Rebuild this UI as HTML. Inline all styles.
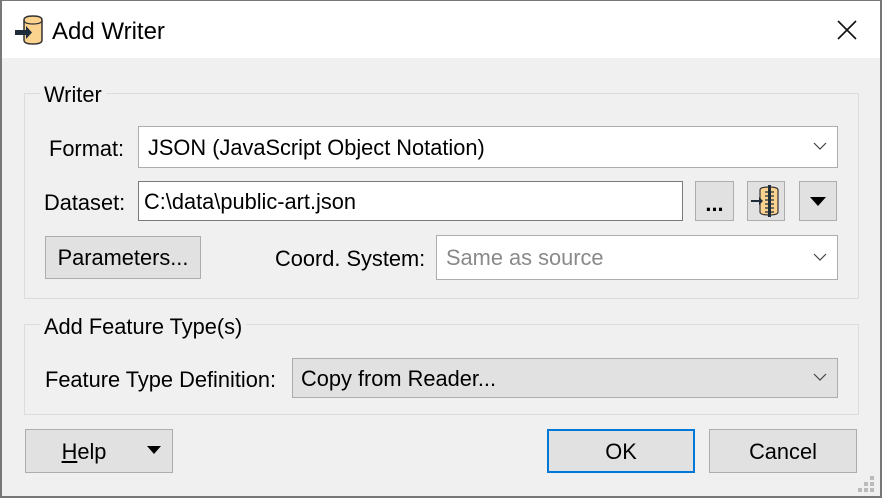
<!DOCTYPE html>
<html><head><meta charset="utf-8"><style>
*{box-sizing:border-box;margin:0;padding:0}
body{width:882px;height:498px;overflow:hidden;background:#f0f0f0;font-family:"Liberation Sans",sans-serif;font-size:21.8px;color:#000;position:relative}
.a{position:absolute;white-space:nowrap}
.win{position:absolute;left:0;top:0;width:882px;height:498px;border:1px solid #777;border-left:2px solid #777;border-right:2px solid #777;border-bottom:2px solid #777;background:#f0f0f0}
.title{position:absolute;left:2px;top:1px;width:878px;height:57px;background:#fff}
.grp{position:absolute;border:1px solid #dcdcdc}
.lbl{position:absolute;background:#f0f0f0;padding:0 4px}
.box{position:absolute;border:1px solid #adadad;background:#fff;padding-left:9px;padding-top:1px;display:flex;align-items:center}
.btn{position:absolute;border:1px solid #adadad;background:#e1e1e1;display:flex;align-items:center;justify-content:center;padding-top:1px}
.chev{position:absolute;right:10px;top:50%;margin-top:-5px}
</style></head><body>
<div class="win"></div>
<div class="title"></div>
<svg class="a" style="left:14px;top:13px" width="32" height="34" viewBox="0 0 32 32">
<path d="M10 6 Q10 2 19 2 Q28 2 28 6 L28 26 Q28 30 19 30 Q10 30 10 26 Z" fill="#fbd38f" stroke="#333" stroke-width="1.5"/>
<path d="M10 6 Q10 10 19 10 Q28 10 28 6" fill="none" stroke="#333" stroke-width="1.2"/>
<rect x="1" y="16" width="12" height="5" fill="#1f2d3a"/><path d="M12 12 L18 18.5 L12 25 Z" fill="#1f2d3a"/>
</svg>
<div class="a" style="left:52px;top:18px;font-size:24px">Add Writer</div>
<svg class="a" style="left:836px;top:19px" width="22" height="22" viewBox="0 0 22 22"><path d="M2 2L20 20M20 2L2 20" stroke="#111" stroke-width="1.6"/></svg>

<div class="grp" style="left:24px;top:93px;width:835px;height:206px"></div>
<div class="lbl" style="left:40px;top:82px">Writer</div>
<div class="a" style="left:49px;top:136px">Format:</div>
<div class="box" style="left:138px;top:126px;width:700px;height:42px">JSON (JavaScript Object Notation)<svg class="chev" width="14" height="9"><path d="M1 1L7 7L13 1" fill="none" stroke="#444" stroke-width="1.2"/></svg></div>
<div class="a" style="left:44px;top:190px">Dataset:</div>
<div class="box" style="left:138px;top:181px;width:545px;height:40px;border-color:#7a7a7a;padding-left:5px">C:\data\public-art.json</div>
<div class="btn" style="left:695px;top:181px;width:39px;height:40px"><span style="font-weight:bold;margin-top:4px">...</span></div>
<div class="btn" style="left:747px;top:181px;width:38px;height:40px;padding-top:0">
<svg width="30" height="34" viewBox="0 0 30 34"><path d="M9 6 Q9 3 18 3 Q27 3 27 6 L27 28 Q27 31 18 31 Q9 31 9 28 Z" fill="#fbd38f" stroke="#333" stroke-width="1.2"/><rect x="17" y="1" width="3" height="32" fill="#1f2d3a"/><path d="M14 8h9M14 12h9M14 16h9M14 20h9M14 24h9M14 28h9" stroke="#1f2d3a" stroke-width="1.2"/><rect x="0" y="16" width="9" height="2" fill="#1f2d3a"/><path d="M8 13L12 17L8 21Z" fill="#1f2d3a"/></svg></div>
<div class="btn" style="left:799px;top:181px;width:38px;height:40px;padding-top:0"><svg width="16" height="9"><path d="M0 0H16L8 9Z" fill="#000"/></svg></div>
<div class="btn" style="left:45px;top:236px;width:156px;height:43px">Parameters...</div>
<div class="a" style="left:275px;top:246px">Coord. System:</div>
<div class="box" style="left:436px;top:235px;width:402px;height:45px;color:#8a8a8a">Same as source<svg class="chev" width="14" height="9"><path d="M1 1L7 7L13 1" fill="none" stroke="#444" stroke-width="1.2"/></svg></div>

<div class="grp" style="left:24px;top:324px;width:835px;height:91px"></div>
<div class="lbl" style="left:40px;top:314px">Add Feature Type(s)</div>
<div class="a" style="left:45px;top:367px">Feature Type Definition:</div>
<div class="box" style="left:292px;top:358px;width:546px;height:40px;background:#e1e1e1;padding-left:8px">Copy from Reader...<svg class="chev" width="14" height="9"><path d="M1 1L7 7L13 1" fill="none" stroke="#444" stroke-width="1.2"/></svg></div>

<div class="btn" style="left:25px;top:429px;width:148px;height:44px"><span style="margin-right:30px"><u>H</u>elp</span><svg class="a" style="left:121px;top:16px" width="14" height="8"><path d="M0 0H14L7 8Z" fill="#000"/></svg></div>
<div class="btn" style="left:547px;top:429px;width:148px;height:44px;border:2px solid #0078d7">OK</div>
<div class="btn" style="left:709px;top:429px;width:148px;height:44px">Cancel</div>
<svg class="a" style="left:858px;top:476px" width="18" height="18"><g fill="#bbb"><rect x="12" y="0" width="4" height="4"/><rect x="6" y="6" width="4" height="4"/><rect x="12" y="6" width="4" height="4"/><rect x="0" y="12" width="4" height="4"/><rect x="6" y="12" width="4" height="4"/><rect x="12" y="12" width="4" height="4"/></g></svg>
</body></html>
